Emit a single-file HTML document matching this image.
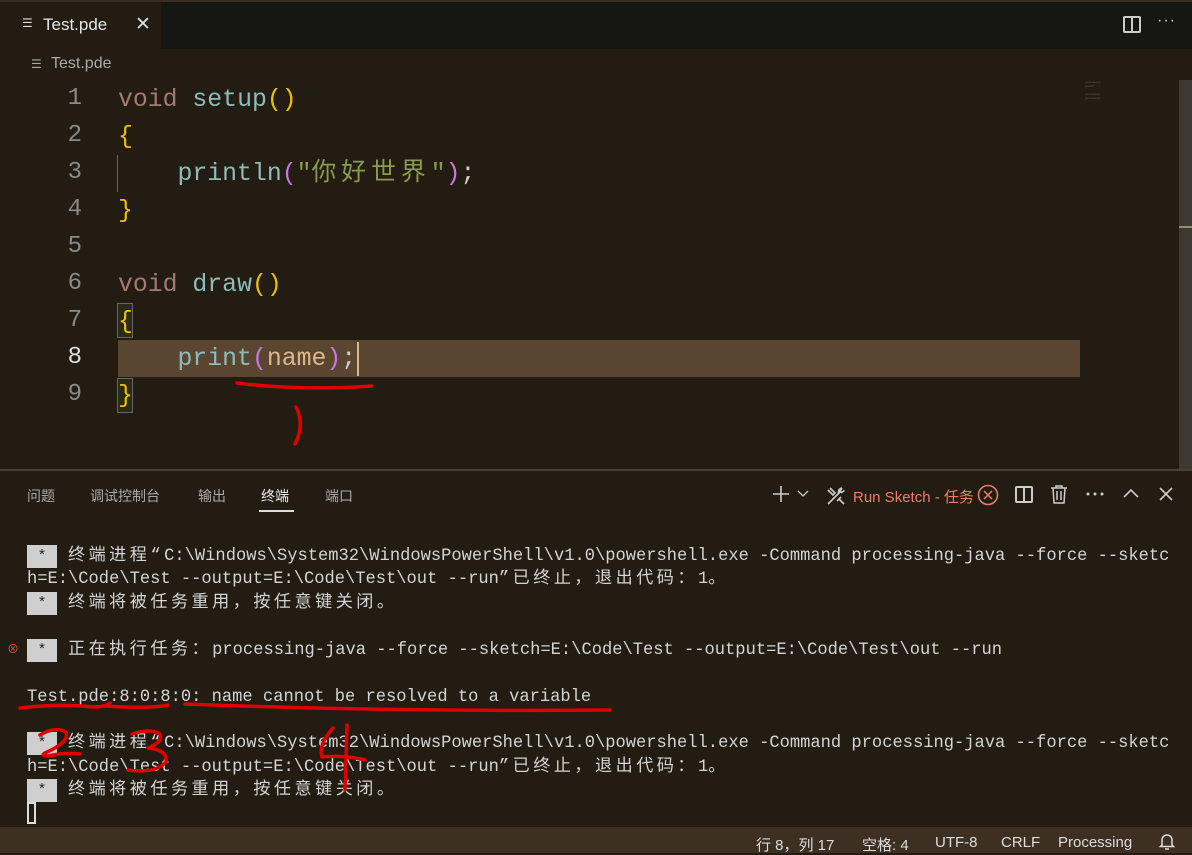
<!DOCTYPE html>
<html><head><meta charset="utf-8"><style>
*{margin:0;padding:0;box-sizing:border-box}
body{width:1192px;height:853px;background:#221c12;position:relative;overflow:hidden;font-family:"Liberation Sans","Noto Sans CJK SC",sans-serif;color:#ccc}
.abs{position:absolute}
.mono{font-family:"Liberation Mono","Noto Sans CJK SC",monospace}
.code{font-size:24.8px;line-height:37px;white-space:pre}
.code .c{letter-spacing:5px}
.ln{position:absolute;left:40px;width:42px;text-align:right;color:#8a8a8a;font-family:"Liberation Mono",monospace;font-size:24px;line-height:37px}
.term{font-size:17.1px;white-space:pre;color:#d4d4d4;position:absolute;left:27px;height:23px;line-height:23px}
.term .c{letter-spacing:3.5px}
.star{display:inline-block;width:30px;height:23px;background:#cfcfcf;color:#222;text-align:center;vertical-align:top;margin-right:11px;font-size:15px}
</style></head><body>
<div class="abs" style="left:0;top:0;width:1192px;height:2px;background:#3a2e22"></div>
<div class="abs" style="left:0;top:2px;width:1192px;height:47px;background:#161712"></div>
<div class="abs" style="left:0;top:2px;width:161px;height:47px;background:#221c12"></div>
<div class="abs" style="left:22px;top:16px;font-size:12px;color:#ddd">☰</div>
<div class="abs" style="left:43px;top:15px;font-size:17px;color:#e6e6e6">Test.pde</div>
<div class="abs" style="left:135px;top:13px;font-size:19px;color:#ddd">✕</div>
<div class="abs" style="left:1123px;top:16px;width:18px;height:17px;border:2px solid #ccc;border-radius:2px"><div style="position:absolute;left:6px;top:0;width:2px;height:13px;background:#ccc"></div></div>
<div class="abs" style="left:1157px;top:12px;font-size:16px;color:#ccc;letter-spacing:1px">···</div>
<div class="abs" style="left:31px;top:57px;font-size:12px;color:#aaa">☰</div>
<div class="abs" style="left:51px;top:55px;font-size:16px;color:#aaa">Test.pde</div>
<!-- line highlight -->
<div class="abs" style="left:118px;top:340px;width:962px;height:37px;background:#5a4630"></div>
<div class="abs" style="left:357px;top:342px;width:2px;height:34px;background:#d9b98a"></div>
<div class="abs" style="left:117px;top:155px;width:1px;height:37px;background:#7a6040"></div>
<div class="abs" style="left:117px;top:303px;width:16px;height:35px;border:1px solid #666;background:#2a2a18"></div>
<div class="abs" style="left:117px;top:378px;width:16px;height:35px;border:1px solid #666;background:#2a2a18"></div>
<div class="ln" style="top:80px">1</div><div class="ln" style="top:117px">2</div><div class="ln" style="top:154px">3</div><div class="ln" style="top:191px">4</div><div class="ln" style="top:228px">5</div><div class="ln" style="top:265px">6</div><div class="ln" style="top:302px">7</div><div class="ln" style="top:339px;color:#ddd">8</div><div class="ln" style="top:376px">9</div>
<div class="abs mono code" style="left:118px;top:82px"><span style="color:#a47a72">void</span> <span style="color:#8fbcbb">setup</span><span style="color:#f0c000">()</span>
<span style="color:#f0c000">{</span>
    <span style="color:#8fbcbb">println</span><span style="color:#c678dd">(</span><span style="color:#8a9a50">"<span class="c">你好世界</span>"</span><span style="color:#c678dd">)</span><span style="color:#ccc">;</span>
<span style="color:#f0c000">}</span>

<span style="color:#a47a72">void</span> <span style="color:#8fbcbb">draw</span><span style="color:#f0c000">()</span>
<span style="color:#f0c000">{</span>
    <span style="color:#8fbcbb">print</span><span style="color:#c678dd">(</span><span style="color:#dcb88c">name</span><span style="color:#c678dd">)</span><span style="color:#ccc">;</span>
<span style="color:#f0c000">}</span></div>
<!-- minimap / scrollbar -->
<div class="abs" style="left:1085px;top:80px;width:35px;height:22px;opacity:.5;font-size:3px;color:#999;line-height:4px">void setup()<br>println("...")<br><br>void draw()<br>print(name)</div>
<div class="abs" style="left:1179px;top:80px;width:13px;height:390px;background:#3d3830"></div>
<div class="abs" style="left:1179px;top:226px;width:13px;height:2px;background:#9a8a70"></div>
<!-- panel -->
<div class="abs" style="left:0;top:469px;width:1192px;height:2px;background:#4a4035"></div>
<div class="abs" style="top:486px;left:27px;font-size:14px;color:#aaa">问题</div>
<div class="abs" style="top:486px;left:90px;font-size:14px;color:#aaa">调试控制台</div>
<div class="abs" style="top:486px;left:198px;font-size:14px;color:#aaa">输出</div>
<div class="abs" style="top:486px;left:261px;font-size:14px;color:#eee">终端</div>
<div class="abs" style="top:510px;left:259px;width:35px;height:2px;background:#ddd"></div>
<div class="abs" style="top:486px;left:325px;font-size:14px;color:#aaa">端口</div>
<svg class="abs" style="left:772px;top:485px" width="18" height="18" viewBox="0 0 18 18" stroke="#ccc" stroke-width="1.6"><path d="M9 1v16M1 9h16"/></svg>
<svg class="abs" style="left:797px;top:490px" width="12" height="8" viewBox="0 0 12 8" fill="none" stroke="#ccc" stroke-width="1.3"><path d="M1 1l5 5 5-5"/></svg>
<svg class="abs" style="left:825px;top:485px" width="22" height="22" viewBox="0 0 22 22" fill="none" stroke="#ccc" stroke-width="1.6"><path d="M3 19L15 7M5 3l5 5-2 2-5-5M14 14l5 5M12 16l4-4M17 3a4 4 0 00-3 6M17 3l-2 3 1.5 1.5 3-2"/></svg>
<div class="abs" style="top:486px;left:853px;font-size:15px;color:#e8806a">Run Sketch - 任务</div>
<svg class="abs" style="left:977px;top:484px" width="22" height="22" viewBox="0 0 22 22" fill="none" stroke="#e8806a" stroke-width="1.5"><circle cx="11" cy="11" r="9.5"/><path d="M7 7l8 8M15 7l-8 8"/></svg>
<div class="abs" style="left:1015px;top:486px;width:18px;height:17px;border:2px solid #ccc;border-radius:2px"><div style="position:absolute;left:6px;top:0;width:2px;height:13px;background:#ccc"></div></div>
<svg class="abs" style="left:1050px;top:484px" width="18" height="20" viewBox="0 0 18 20" fill="none" stroke="#ccc" stroke-width="1.5"><path d="M1 4h16M6 4V2h6v2M3 4l1 15h10l1-15M7 7v9M11 7v9"/></svg>
<svg class="abs" style="left:1085px;top:492px" width="20" height="4"><circle cx="3" cy="2" r="1.5" fill="#ccc"/><circle cx="10" cy="2" r="1.5" fill="#ccc"/><circle cx="17" cy="2" r="1.5" fill="#ccc"/></svg>
<svg class="abs" style="left:1123px;top:488px" width="16" height="10" viewBox="0 0 16 10" fill="none" stroke="#ccc" stroke-width="1.6"><path d="M1 9l7-7 7 7"/></svg>
<svg class="abs" style="left:1159px;top:487px" width="14" height="14" viewBox="0 0 14 14" fill="none" stroke="#ccc" stroke-width="1.6"><path d="M1 1l12 12M13 1L1 13"/></svg>
<!-- terminal -->
<div class="term mono" style="top:545px"><span class="star">*</span><span class="c">终端进程“</span>C:\Windows\System32\WindowsPowerShell\v1.0\powershell.exe -Command processing-java --force --sketc</div>
<div class="term mono" style="top:568px">h=E:\Code\Test --output=E:\Code\Test\out --run<span class="c">”已终止，退出代码：</span>1<span class="c">。</span></div>
<div class="term mono" style="top:592px"><span class="star">*</span><span class="c">终端将被任务重用，按任意键关闭。</span></div>
<div class="abs" style="left:7px;top:640px;color:#e05050;font-size:12px">⊗</div>
<div class="term mono" style="top:639px"><span class="star">*</span><span class="c">正在执行任务：</span>processing-java --force --sketch=E:\Code\Test --output=E:\Code\Test\out --run</div>
<div class="term mono" style="top:686px">Test.pde:8:0:8:0: name cannot be resolved to a variable</div>
<div class="term mono" style="top:732px"><span class="star">*</span><span class="c">终端进程“</span>C:\Windows\System32\WindowsPowerShell\v1.0\powershell.exe -Command processing-java --force --sketc</div>
<div class="term mono" style="top:756px">h=E:\Code\Test --output=E:\Code\Test\out --run<span class="c">”已终止，退出代码：</span>1<span class="c">。</span></div>
<div class="term mono" style="top:779px"><span class="star">*</span><span class="c">终端将被任务重用，按任意键关闭。</span></div>
<div class="abs" style="left:27px;top:802px;width:9px;height:22px;border:2px solid #ddd"></div>
<!-- red annotations -->
<svg class="abs" style="left:0;top:0" width="1192" height="853" fill="none" stroke="#e00000" stroke-width="3.5" stroke-linecap="round" stroke-linejoin="round">
<path d="M237 383Q300 391 372 386"/>
<path d="M296 407Q305 425 295 444"/>
<path d="M20 708Q60 703 93 707Q105 707 110 703"/>
<path d="M104 706Q150 709 168 705"/>
<path d="M185 704Q400 712 610 710"/>
<path d="M40 735Q55 726 66 732Q70 742 45 753Q40 756 48 756Q65 752 80 754"/>
<path d="M132 734Q150 728 160 734Q163 742 148 748Q168 750 166 762Q155 774 128 770"/>
<path d="M333 728Q318 745 322 757Q345 755 365 760M347 725L345 790"/>
</svg>
<!-- status bar -->
<div class="abs" style="left:0;top:827px;width:1192px;height:26px;background:#3d3022"></div>
<div class="abs" style="left:756px;top:834px;font-size:15px;color:#ddd;white-space:nowrap">行 8，列 17</div>
<div class="abs" style="left:862px;top:834px;font-size:15px;color:#ddd;white-space:nowrap">空格: 4</div>
<div class="abs" style="left:935px;top:834px;font-size:15px;color:#ddd">UTF-8</div>
<div class="abs" style="left:1001px;top:834px;font-size:15px;color:#ddd">CRLF</div>
<div class="abs" style="left:1058px;top:834px;font-size:15px;color:#ddd">Processing</div>
<svg class="abs" style="left:1158px;top:832px" width="18" height="19" viewBox="0 0 18 19" fill="none" stroke="#ddd" stroke-width="1.5"><path d="M4 13V8a5 5 0 0110 0v5l1.5 1.5h-13zM7 17h4"/></svg>
</body></html>
